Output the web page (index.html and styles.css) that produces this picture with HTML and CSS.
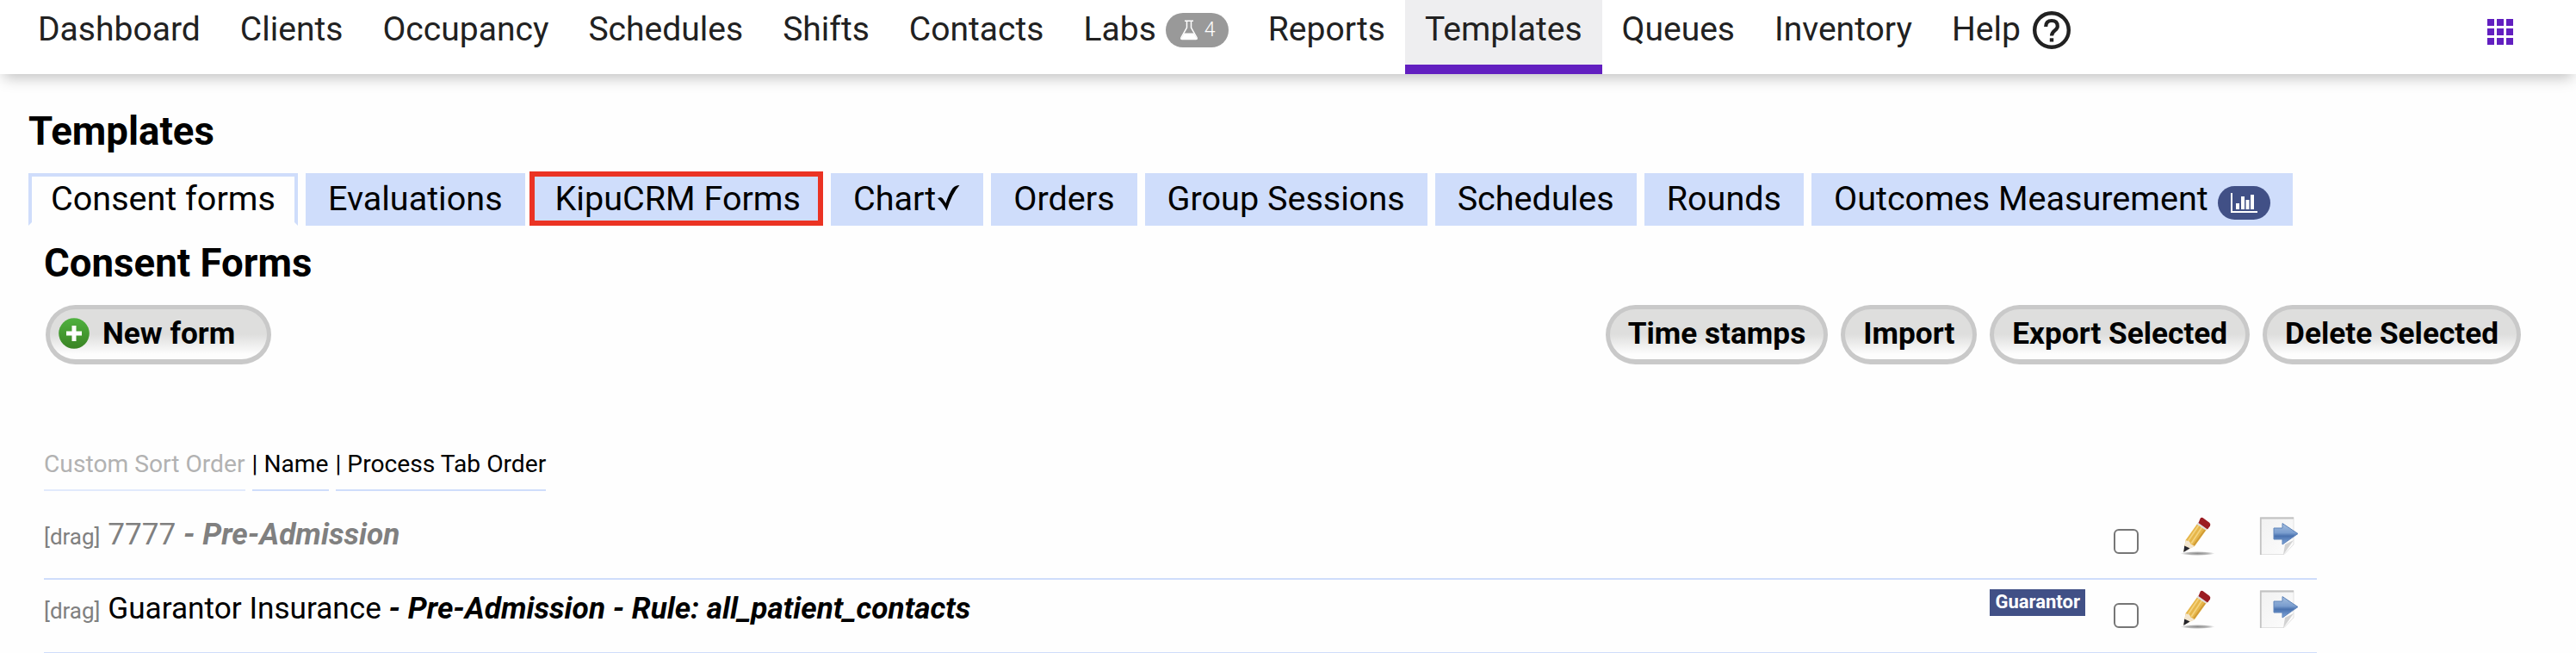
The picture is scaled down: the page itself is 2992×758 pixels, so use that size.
FILE: index.html
```html
<!DOCTYPE html>
<html lang="en">
<head>
  <meta charset="UTF-8">
  <meta name="viewport" content="width=device-width, initial-scale=1.0">
  <title>Templates</title>
  <link rel="stylesheet" href="styles.css">
</head>
<body>
  <!-- shared icons -->
  <svg class="defs" width="0" height="0">
    <defs>
      <linearGradient id="arrow-fill" x1="0" y1="0" x2="0" y2="1">
        <stop offset="0" stop-color="#a5bfdf"/>
        <stop offset="0.45" stop-color="#7a9dce"/>
        <stop offset="0.6" stop-color="#4a72af"/>
        <stop offset="1" stop-color="#83a9dc"/>
      </linearGradient>
      <linearGradient id="paper-fill" x1="0" y1="0" x2="1" y2="1">
        <stop offset="0" stop-color="#f1f1f1"/>
        <stop offset="1" stop-color="#fdfdfd"/>
      </linearGradient>
      <linearGradient id="plus-fill" x1="0" y1="0" x2="0" y2="1">
        <stop offset="0" stop-color="#4fb13f"/>
        <stop offset="1" stop-color="#3a8424"/>
      </linearGradient>
      <radialGradient id="shadow-fill">
        <stop offset="0" stop-color="#8d8d8d"/>
        <stop offset="0.6" stop-color="#b5b5b5"/>
        <stop offset="1" stop-color="#fefefe"/>
      </radialGradient>
      <symbol id="icon-pencil" viewBox="0 0 48 48">
        <ellipse cx="20.500" cy="45.500" rx="20" ry="2.400" fill="url(#shadow-fill)"/>
        <path d="M20.500 10.500 31 17.500 17 37 4.500 43 6.500 30z" fill="#e6b64a"/>
        <path d="M22 12.500 9.500 31M25.500 15 13 34" stroke="#f4d27c" stroke-width="1.800"/>
        <path d="M29.500 17.500 16 36" stroke="#cf9a35" stroke-width="1.800"/>
        <path d="M6.500 30 11 31.500 12.500 34.500 17 37 4.500 43.500z" fill="#f3e6cf"/>
        <path d="M5.200 36.500 11.500 39.500 4.200 44z" fill="#26262c"/>
        <path d="M21.500 9 31.500 16 30 18.500 19.500 11.500z" fill="#dedede"/>
        <path d="M23.500 5Q24.500 3 26.500 4L34 9.500Q36 11 35 13.500L32 17.500 21.500 10z" fill="#9b1c22"/>
      </symbol>
      <symbol id="icon-export" viewBox="0 0 48 48">
        <path d="M2.500 3.500H41V35L30 46.500H2.500z" fill="url(#paper-fill)" stroke="#e2e2e2" stroke-width="1"/>
        <path d="M2.800 47V4.500H41" fill="none" stroke="#c3c3c3" stroke-width="1.800"/>
        <path d="M41 30 29 47 31 35z" fill="#d2d2d2"/>
        <path d="M18 16H28V10.500L46 22.500 28 35V29H18z" fill="url(#arrow-fill)" stroke="#5f84ba" stroke-width="1"/>
      </symbol>
    </defs>
  </svg>

  <nav class="navbar">
    <a class="nav-item">Dashboard</a>
    <a class="nav-item">Clients</a>
    <a class="nav-item">Occupancy</a>
    <a class="nav-item">Schedules</a>
    <a class="nav-item">Shifts</a>
    <a class="nav-item">Contacts</a>
    <a class="nav-item">Labs
      <span class="badge">
        <svg width="22" height="24" viewBox="0 0 22 24">
          <path d="M6 1.200H16M8.500 1V9L2 20.500Q1.200 22.500 3 22.500H19Q20.800 22.500 20 20.500L13.500 9V1" fill="none" stroke="#fff" stroke-width="1.500"/>
          <path d="M5.500 15.500H16.500L20.500 22.500H1.500z" fill="#fff"/>
        </svg>
        4
      </span>
    </a>
    <a class="nav-item">Reports</a>
    <a class="nav-item active">Templates</a>
    <a class="nav-item">Queues</a>
    <a class="nav-item">Inventory</a>
    <a class="nav-item">Help
      <svg class="help-icon" width="44" height="44" viewBox="0 0 44 44" fill="none" stroke="#212121">
        <circle cx="22" cy="22" r="19.800" stroke-width="4.400"/>
        <path d="M15.200 18Q15.200 11 22 11T28.800 17.500C28.800 22.500 22 22.500 22 28.500" stroke-width="4.200"/>
        <path d="M22 31.300V35.500" stroke-width="4.400"/>
      </svg>
    </a>
    <svg class="apps-icon" width="30" height="30" viewBox="0 0 30 30" fill="#621fc0">
      <path d="M0 0h8v8H0zM11 0h8v8h-8zM22 0h8v8h-8zM0 11h8v8H0zM11 11h8v8h-8zM22 11h8v8h-8zM0 22h8v8H0zM11 22h8v8h-8zM22 22h8v8h-8z"/>
    </svg>
  </nav>

  <main class="page">
    <h1>Templates</h1>

    <div class="tabs">
      <a class="tab current">Consent forms</a>
      <a class="tab">Evaluations</a>
      <a class="tab marked">KipuCRM Forms</a>
      <a class="tab">Chart<svg class="check" width="29" height="34" viewBox="0 0 29 34"><path d="M2 16.500Q5.500 13.500 8 16.500L11.500 22Q15 11 19.500 4.500Q22.500 1 27.500 1Q19 10 12.500 30.500Q7 20 2 16.500z"/></svg></a>
      <a class="tab">Orders</a>
      <a class="tab">Group Sessions</a>
      <a class="tab">Schedules</a>
      <a class="tab">Rounds</a>
      <a class="tab">Outcomes Measurement
        <span class="chart-badge">
          <svg width="31" height="24" viewBox="0 0 31 24" fill="#fff">
            <path d="M0 0h2v21h29v2H0zM6 12h4v7H6zM12 4h4v15h-4zM17.500 8h4v11h-4zM23 2h4v17h-4z"/>
          </svg>
        </span>
      </a>
    </div>

    <section class="content">
      <h2>Consent Forms</h2>

      <div class="toolbar">
        <button class="btn btn-new">
          <svg width="36" height="36" viewBox="0 0 36 36">
            <circle cx="18" cy="18" r="17.800" fill="url(#plus-fill)"/>
            <path d="M18 9V27M9 18H27" stroke="#fff" stroke-width="5"/>
          </svg>
          New form
        </button>
        <div class="actions">
          <button class="btn">Time stamps</button>
          <button class="btn">Import</button>
          <button class="btn">Export Selected</button>
          <button class="btn">Delete Selected</button>
        </div>
      </div>

      <div class="sort">
        <a class="sort-link off">Custom Sort Order</a>
        <a class="sort-link">| Name</a>
        <a class="sort-link">| Process Tab Order</a>
      </div>

      <div class="row disabled">
        <div class="name"><span class="drag">[drag]</span> 7777 <b>- Pre-Admission</b></div>
        <input type="checkbox" class="select">
        <svg class="edit" width="48" height="48"><use href="#icon-pencil"/></svg>
        <svg class="export" width="48" height="48"><use href="#icon-export"/></svg>
      </div>
      <div class="row">
        <div class="name"><span class="drag">[drag]</span> Guarantor Insurance <b>- Pre-Admission - Rule: all_patient_contacts</b></div>
        <span class="label">Guarantor</span>
        <input type="checkbox" class="select">
        <svg class="edit" width="48" height="48"><use href="#icon-pencil"/></svg>
        <svg class="export" width="48" height="48"><use href="#icon-export"/></svg>
      </div>
    </section>
  </main>
</body>
</html>
```
FILE: styles.css
```css
body {
  margin: 0;
  height: 758px;
  overflow: hidden;
  background-color: #fefefe;
  color: #000;
  font-family: Roboto, sans-serif;
}
.defs {
  position: absolute;
}
.navbar {
  display: flex;
  height: 86px;
  padding-left: 21px;
  background-color: #fff;
  box-shadow: 0 8px 16px -4px rgba(0, 0, 0, 0.25);
}
.nav-item {
  display: flex;
  height: 75px;
  padding: 0 23px;
  border-bottom: 11px solid transparent;
  color: #212121;
  font-size: 39.050px;
  line-height: 69px;
  white-space: nowrap;
}
.nav-item.active {
  background-color: #eeeef0;
  border-bottom-color: #621fc0;
}
.badge {
  display: flex;
  align-items: center;
  gap: 7px;
  box-sizing: border-box;
  width: 73px;
  height: 40px;
  margin: 15px 0 0 11px;
  padding-left: 16px;
  border-radius: 20px;
  background-color: #999;
  color: #fff;
  font-size: 23px;
  font-weight: 300;
  line-height: 40px;
}
.help-icon {
  margin: 13px 0 0 14px;
}
.apps-icon {
  margin: 22px 73px 0 auto;
}
.page {
  padding: 0 33px;
}
h1 {
  margin: 0;
  padding-top: 37px;
  font-size: 45.600px;
  line-height: 60px;
}
.tabs {
  display: flex;
  gap: 9px;
  margin-top: 18px;
}
.tab {
  display: flex;
  position: relative;
  box-sizing: border-box;
  height: 61px;
  padding: 0 26px;
  background-color: #cfddfb;
  font-size: 39.550px;
  line-height: 60px;
  white-space: nowrap;
}
.tab.current {
  padding: 0 22px;
  border: 4px solid #cfddfb;
  border-bottom-color: transparent;
  background-color: transparent;
  line-height: 52px;
}
/* red frame around the CRM tab */
.tab.marked::after {
  content: "";
  position: absolute;
  top: -2px;
  right: 0;
  bottom: 0;
  left: -4px;
  border: 6px solid #eb3323;
}
.check {
  margin-top: 13px;
}
.chart-badge {
  display: flex;
  align-items: center;
  justify-content: center;
  width: 61px;
  height: 39px;
  margin: 15px 0 0 11px;
  border-radius: 20px;
  background-color: #415086;
}
.content {
  padding-left: 18px;
}
h2 {
  margin: 0;
  padding-top: 14px;
  font-size: 45.600px;
  line-height: 60px;
}
.toolbar {
  display: flex;
  justify-content: space-between;
  margin-top: 18px;
  padding: 0 31px 0 2px;
}
.actions {
  display: flex;
  gap: 15px;
}
.btn {
  display: flex;
  align-items: center;
  box-sizing: border-box;
  height: 69px;
  padding: 0 21px 2px;
  border: 5px solid #c9c9c9;
  border-bottom-width: 6px;
  border-radius: 35px;
  background: linear-gradient(#dededd 50%, #fdfdfd 90%);
  color: #000;
  font-family: Roboto, sans-serif;
  font-size: 35.200px;
  font-weight: bold;
  white-space: nowrap;
}
.btn-new {
  gap: 15px;
  width: 262px;
  padding-left: 10px;
}
.sort {
  display: flex;
  gap: 8px;
  margin-top: 91px;
}
.sort-link {
  height: 54px;
  border-bottom: 2px solid #cfddfb;
  font-size: 28.200px;
  line-height: 50px;
}
.sort-link.off {
  opacity: 0.6;
  color: #808080;
}
.row {
  display: flex;
  width: 2640px;
  height: 84px;
  border-bottom: 2px solid #cfddfb;
}
.row.disabled {
  box-sizing: border-box;
  height: 103px;
  padding-top: 17px;
}
.name {
  flex: 1;
  font-size: 35.200px;
  line-height: 66px;
}
.name b {
  font-style: italic;
}
.disabled .name {
  color: #808080;
}
.drag {
  color: #808080;
  font-size: 26px;
}
.label {
  height: 31px;
  margin: 11px 33px 0 0;
  padding: 0 6px;
  background-color: #415086;
  color: #fff;
  font-size: 22px;
  font-weight: bold;
  line-height: 30px;
}
.select {
  appearance: none;
  box-sizing: border-box;
  width: 29px;
  height: 29px;
  margin: 27px 48px 0 0;
  border: 2px solid #767676;
  border-radius: 6px;
  background-color: #fff;
}
.edit {
  margin: 9px 43px 0 0;
}
.export {
  margin: 9px 20px 0 0;
}
.disabled .edit,
.disabled .export {
  margin-top: 10px;
}
```
